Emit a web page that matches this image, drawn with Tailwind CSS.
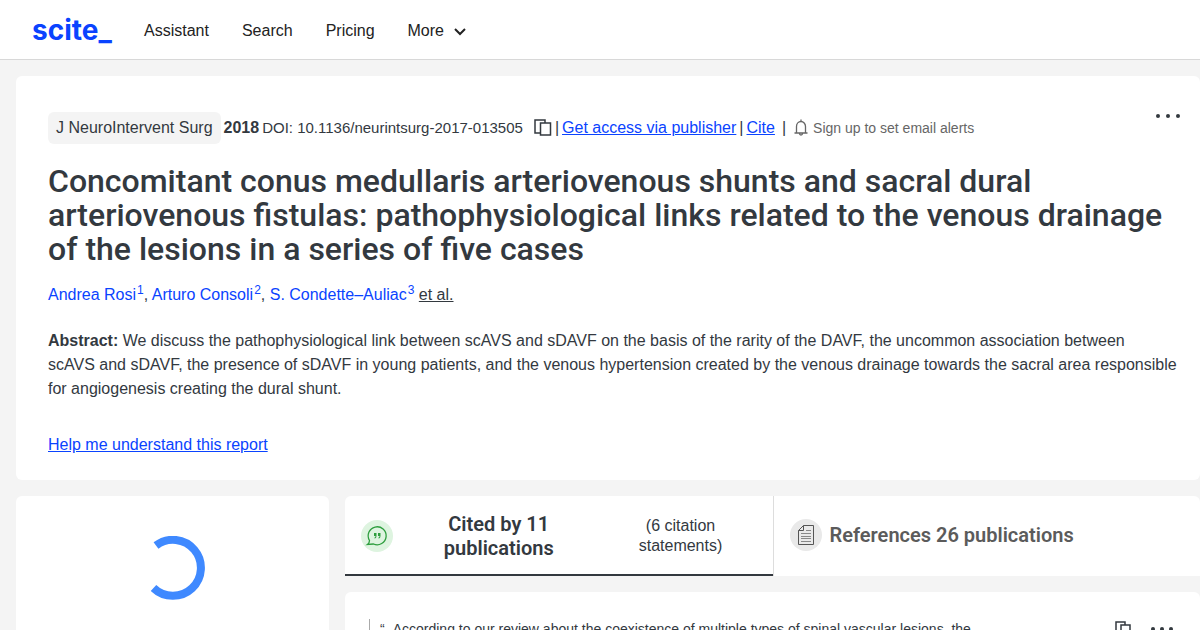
<!DOCTYPE html>
<html lang="en">
<head>
    <meta charset="UTF-8" />
    <meta name="viewport" content="width=device-width, initial-scale=1.0">
    <title>scite_</title>
    <script src="https://cdn.jsdelivr.net/npm/@tailwindcss/browser@4"></script>
    <style>
        body {
            font-family: 'Liberation Sans', Arial, sans-serif;
        }
        .heading {
            font-family: Roboto, 'Liberation Sans', sans-serif;
        }
        .logo {
            font-family: Inter, sans-serif;
        }
    </style>
</head>
<body class="bg-[#f4f4f4] text-[#33393f] h-screen overflow-hidden">
    <!-- Top navigation -->
    <header class="flex items-center h-15 px-8 gap-8 bg-white border-b border-[#d8d8d8] text-[#222]">
        <a href="#" aria-label="scite home" class="logo text-[28px] leading-7 font-bold text-[#0a43ff] w-20">scite_</a>
        <nav class="flex items-center gap-[33px] pt-0.5">
            <a href="#">Assistant</a>
            <a href="#">Search</a>
            <a href="#">Pricing</a>
            <button type="button" class="flex items-center gap-2">
                More
                <svg width="16" height="16" viewBox="0 0 16 16" fill="none" stroke="currentColor" stroke-width="2"><path d="M3 6l5 5 5-5" /></svg>
            </button>
        </nav>
    </header>

    <main class="pl-4 pt-4 flex flex-col gap-4">
        <!-- Paper summary -->
        <article class="relative bg-white rounded-md pl-8 pr-[22px] pt-9 pb-[23px]">
            <button type="button" aria-label="More options" class="absolute right-5 top-9">
                <svg width="24" height="8" viewBox="0 0 24 8" fill="currentColor"><circle cx="2" cy="4" r="2" /><circle cx="12" cy="4" r="2" /><circle cx="22" cy="4" r="2" /></svg>
            </button>
            <div class="flex items-center gap-[3px] whitespace-nowrap">
                <span class="bg-[#f4f4f4] rounded-md px-2 py-1">J NeuroIntervent Surg</span>
                <b>2018</b>
                <span class="text-[15px]">DOI: 10.1136/neurintsurg-2017-013505</span>
                <button type="button" aria-label="Copy DOI" class="ml-2">
                    <svg width="18" height="18" viewBox="0 0 18 18" fill="none" stroke="currentColor" stroke-width="1.5"><path d="M6 14H1V1h10v3" /><path d="M6.500 4h10v12h-10z" /></svg>
                </button>
                <span>|</span>
                <a href="#" class="text-[#0a43ff] underline">Get access via publisher</a>
                <span>|</span>
                <a href="#" class="text-[#0a43ff] underline">Cite</a>
                <span class="ml-1">|</span>
                <a href="#" class="flex items-center gap-1 ml-1 text-sm text-[#666]">
                    <svg width="16" height="18" viewBox="0 0 16 18" fill="none" stroke="currentColor" stroke-width="1.3"><path d="M1.500 14h13M3.500 14V7.500a4.500 5 0 0 1 9 0V14M8 2.500V0.500M6.500 14.500a1.500 1.500 0 0 0 3 0" /></svg>
                    Sign up to set email alerts
                </a>
            </div>
            <h1 class="heading mt-5 text-[32px] leading-[34px] font-medium">Concomitant conus medullaris arteriovenous shunts and sacral dural arteriovenous fistulas: pathophysiological links related to the venous drainage of the lesions in a series of five cases</h1>
            <p class="mt-[17px] leading-6">
                <a href="#" class="text-[#0a43ff]">Andrea Rosi<sup class="text-xs ml-px">1</sup></a>,
                <a href="#" class="text-[#0a43ff]">Arturo Consoli<sup class="text-xs ml-px">2</sup></a>,
                <a href="#" class="text-[#0a43ff]">S. Condette–Auliac<sup class="text-xs ml-px">3</sup></a>
                <a href="#" class="underline">et al.</a>
            </p>
            <p class="mt-[22px] leading-6"><b>Abstract:</b> We discuss the pathophysiological link between scAVS and sDAVF on the basis of the rarity of the DAVF, the uncommon association between scAVS&nbsp;and sDAVF, the presence of sDAVF in young patients, and the venous hypertension created by the venous drainage towards the sacral area responsible for angiogenesis creating the dural shunt.</p>
            <a href="#" class="block mt-8 leading-6 text-[#0a43ff] underline">Help me understand this report</a>
        </article>

        <div class="flex gap-4">
            <!-- Sidebar, still loading -->
            <aside class="w-[313px] shrink-0 h-60 bg-white rounded-md">
                <svg class="mx-auto mt-10" width="64" height="64" viewBox="0 0 64 64" fill="none" stroke="#3f89ff" stroke-width="8"><path d="M15 9.500A28 28 0 1 1 12.500 52" /></svg>
            </aside>

            <section class="flex-1 flex flex-col gap-4">
                <!-- Tabs -->
                <div class="grid grid-cols-2 h-20 bg-white rounded-t-md overflow-hidden">
                    <button type="button" class="flex items-center px-4 pt-0.5 border-b-2 border-[#33393f]">
                        <svg class="shrink-0" width="32" height="32" viewBox="0 0 32 32" fill="none" stroke="#2e9e3e" stroke-width="1.3"><circle cx="16" cy="16" r="16" fill="#def4e0" stroke="none" /><path d="M8.500 20.500a9 9 0 1 1 4 3.500L6.500 24.500Q8.500 23 8.500 20.500z" /><path fill="#2e9e3e" stroke="none" d="M13 13h2.500v3q0 2.500-2 2.500v-1q1 0 1-1.500H13zM17 13h2.500v3q0 2.500-2 2.500v-1q1 0 1-1.500H17z" /></svg>
                        <span class="heading flex-1 px-8 text-xl leading-6 font-semibold">Cited by 11 publications</span>
                        <span class="w-[152px] px-6 leading-5">(6 citation statements)</span>
                    </button>
                    <button type="button" class="flex items-center px-4 pb-0.5 gap-2 border-l border-[#ddd] text-[#5b5b5b]">
                        <svg class="shrink-0" width="32" height="32" viewBox="0 0 32 32" fill="none" stroke="#555"><circle cx="16" cy="16" r="16" fill="#e9e9e9" stroke="none" /><path d="M13.500 6.500h10v19h-15v-14zM13.500 6.500v5h-5" /><path stroke="#888" d="M16 11.500h5M11 14.500h10M11 17.500h10M11 19.500h10M11 22.500h10" /></svg>
                        <span class="heading text-xl font-semibold">References 26 publications</span>
                    </button>
                </div>

                <!-- First citation statement -->
                <div class="flex items-start h-40 bg-white rounded-md pl-6 pr-[27px] pt-[27px]">
                    <blockquote class="flex-1 flex gap-2 border-l border-[#aaa] pl-2.5 text-sm leading-5"><span>“</span>According to our review about the coexistence of multiple types of spinal vascular lesions, the</blockquote>
                    <button type="button" aria-label="Copy statement" class="mr-5 mt-0.5">
                        <svg width="16" height="18" viewBox="0 0 16 18" fill="none" stroke="currentColor" stroke-width="1.5"><path d="M5 14H1V1h9v3" /><path d="M6 4h9v13H6z" /></svg>
                    </button>
                    <button type="button" aria-label="Statement options" class="mt-2">
                        <svg width="22" height="4" viewBox="0 0 22 4" fill="currentColor"><circle cx="2" cy="2" r="2" /><circle cx="11" cy="2" r="2" /><circle cx="20" cy="2" r="2" /></svg>
                    </button>
                </div>
            </section>
        </div>
    </main>
</body>
</html>
